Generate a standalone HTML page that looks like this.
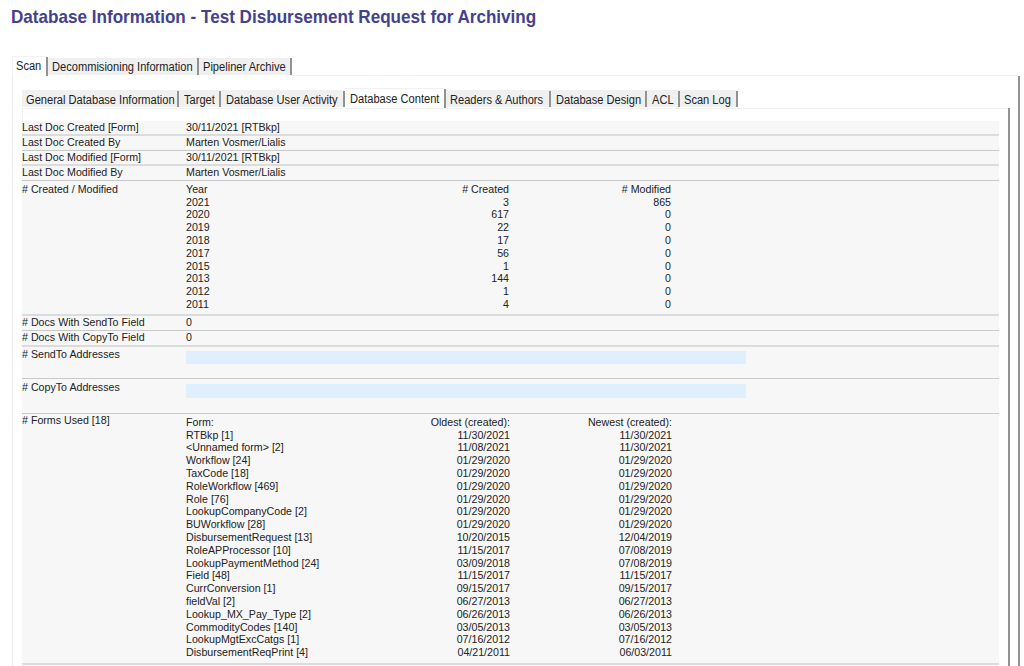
<!DOCTYPE html>
<html><head><meta charset="utf-8">
<style>
html,body{margin:0;padding:0;background:#fff;width:1024px;height:666px;overflow:hidden;position:relative;font-family:"Liberation Sans",sans-serif;color:#222}
.a{position:absolute}
#title{left:11px;top:7.6px;font-size:17.1px;font-weight:bold;color:#43428c;white-space:nowrap;line-height:20px;transform:scaleY(1.07);transform-origin:0 15.4px}
.tab{position:absolute;font-size:11.1px;line-height:14px;white-space:nowrap;color:#222;transform:scaleY(1.1);transform-origin:0 11px}
.t{position:absolute;font-size:10.67px;line-height:12.8px;white-space:nowrap;color:#222}
.r{text-align:right}
</style></head><body>
<div id="title" class="a">Database Information - Test Disbursement Request for Archiving</div>
<div class="a" style="left:12px;top:56px;width:35px;height:20px;background:#fff;border-top:1px solid #f2f2f2;border-left:1px solid #f2f2f2;box-sizing:border-box"></div>
<div class="a" style="left:48px;top:58px;width:150px;height:17px;background:#f0f0f0;"></div>
<div class="a" style="left:199px;top:58px;width:92px;height:17px;background:#f0f0f0;"></div>
<div class="a" style="left:46px;top:57px;width:2px;height:19px;background:#929292;"></div>
<div class="a" style="left:197px;top:58px;width:2px;height:17px;background:#929292;"></div>
<div class="a" style="left:290px;top:58px;width:2px;height:17px;background:#929292;"></div>
<div class="tab" style="left:16px;top:59px">Scan</div>
<div class="tab" style="left:52px;top:60px">Decommisioning Information</div>
<div class="tab" style="left:203px;top:60px">Pipeliner Archive</div>
<div class="a" style="left:292px;top:75px;width:726px;height:1px;background:#f0f0f0;"></div>
<div class="a" style="left:12px;top:76px;width:1px;height:600px;background:#ececec;"></div>
<div class="a" style="left:1018px;top:76px;width:2px;height:600px;background:#929292;"></div>
<div class="a" style="left:22px;top:90px;width:322px;height:17px;background:#f0f0f0;"></div>
<div class="a" style="left:446px;top:90px;width:291px;height:17px;background:#f0f0f0;"></div>
<div class="a" style="left:345px;top:88px;width:100px;height:20px;background:#fff;border-top:1px solid #f0f0f0;box-sizing:border-box"></div>
<div class="a" style="left:177px;top:91px;width:2px;height:16px;background:#929292;"></div>
<div class="a" style="left:219px;top:91px;width:2px;height:16px;background:#929292;"></div>
<div class="a" style="left:343px;top:91px;width:2px;height:16px;background:#929292;"></div>
<div class="a" style="left:549px;top:91px;width:2px;height:16px;background:#929292;"></div>
<div class="a" style="left:645px;top:91px;width:2px;height:16px;background:#929292;"></div>
<div class="a" style="left:678px;top:91px;width:2px;height:16px;background:#929292;"></div>
<div class="a" style="left:736px;top:91px;width:2px;height:16px;background:#929292;"></div>
<div class="a" style="left:444px;top:89px;width:2px;height:19px;background:#929292;"></div>
<div class="tab" style="left:26px;top:93px">General Database Information</div>
<div class="tab" style="left:184px;top:93px">Target</div>
<div class="tab" style="left:226px;top:93px">Database User Activity</div>
<div class="tab" style="left:450px;top:93px">Readers &amp; Authors</div>
<div class="tab" style="left:556px;top:93px">Database Design</div>
<div class="tab" style="left:652px;top:93px">ACL</div>
<div class="tab" style="left:684px;top:93px">Scan Log</div>
<div class="tab" style="left:350px;top:92px">Database Content</div>
<div class="a" style="left:737px;top:108px;width:271px;height:1px;background:#f0f0f0;"></div>
<div class="a" style="left:22px;top:108px;width:715px;height:1px;background:#f0f0f0;"></div>
<div class="a" style="left:22px;top:109px;width:1px;height:12px;background:#f0f0f0;"></div>
<div class="a" style="left:1008px;top:108px;width:2px;height:600px;background:#929292;"></div>
<div class="a" style="left:22px;top:121px;width:977px;height:545px;background:#f7f7f7;"></div>
<div class="a" style="left:22px;top:134px;width:977px;height:2px;background:#dcdcdc;"></div>
<div class="a" style="left:22px;top:150px;width:977px;height:1px;background:#c9c9c9;"></div>
<div class="a" style="left:22px;top:164px;width:977px;height:2px;background:#dcdcdc;"></div>
<div class="a" style="left:22px;top:180px;width:977px;height:1px;background:#c9c9c9;"></div>
<div class="a" style="left:22px;top:314px;width:977px;height:2px;background:#dcdcdc;"></div>
<div class="a" style="left:22px;top:330px;width:977px;height:1px;background:#c9c9c9;"></div>
<div class="a" style="left:22px;top:345px;width:977px;height:2px;background:#dcdcdc;"></div>
<div class="a" style="left:22px;top:378px;width:977px;height:1px;background:#c9c9c9;"></div>
<div class="a" style="left:22px;top:413px;width:977px;height:1px;background:#c9c9c9;"></div>
<div class="a" style="left:22px;top:663px;width:977px;height:2px;background:#dcdcdc;"></div>
<div class="a" style="left:186px;top:351px;width:560px;height:13px;background:#dfeffd;"></div>
<div class="a" style="left:186px;top:384px;width:560px;height:14px;background:#dfeffd;"></div>
<div class="t" style="left:22px;top:121px">Last Doc Created [Form]</div>
<div class="t" style="left:186px;top:121px">30/11/2021 [RTBkp]</div>
<div class="t" style="left:22px;top:136px">Last Doc Created By</div>
<div class="t" style="left:186px;top:136px">Marten Vosmer/Lialis</div>
<div class="t" style="left:22px;top:151px">Last Doc Modified [Form]</div>
<div class="t" style="left:186px;top:151px">30/11/2021 [RTBkp]</div>
<div class="t" style="left:22px;top:166px">Last Doc Modified By</div>
<div class="t" style="left:186px;top:166px">Marten Vosmer/Lialis</div>
<div class="t" style="left:22px;top:183px"># Created / Modified</div>
<div class="t" style="left:186px;top:183px">Year</div>
<div class="t r" style="right:515px;top:183px"># Created</div>
<div class="t r" style="right:353px;top:183px"># Modified</div>
<div class="t" style="left:186px;top:196px">2021</div>
<div class="t r" style="right:515px;top:196px">3</div>
<div class="t r" style="right:353px;top:196px">865</div>
<div class="t" style="left:186px;top:208px">2020</div>
<div class="t r" style="right:515px;top:208px">617</div>
<div class="t r" style="right:353px;top:208px">0</div>
<div class="t" style="left:186px;top:221px">2019</div>
<div class="t r" style="right:515px;top:221px">22</div>
<div class="t r" style="right:353px;top:221px">0</div>
<div class="t" style="left:186px;top:234px">2018</div>
<div class="t r" style="right:515px;top:234px">17</div>
<div class="t r" style="right:353px;top:234px">0</div>
<div class="t" style="left:186px;top:247px">2017</div>
<div class="t r" style="right:515px;top:247px">56</div>
<div class="t r" style="right:353px;top:247px">0</div>
<div class="t" style="left:186px;top:260px">2015</div>
<div class="t r" style="right:515px;top:260px">1</div>
<div class="t r" style="right:353px;top:260px">0</div>
<div class="t" style="left:186px;top:272px">2013</div>
<div class="t r" style="right:515px;top:272px">144</div>
<div class="t r" style="right:353px;top:272px">0</div>
<div class="t" style="left:186px;top:285px">2012</div>
<div class="t r" style="right:515px;top:285px">1</div>
<div class="t r" style="right:353px;top:285px">0</div>
<div class="t" style="left:186px;top:298px">2011</div>
<div class="t r" style="right:515px;top:298px">4</div>
<div class="t r" style="right:353px;top:298px">0</div>
<div class="t" style="left:22px;top:316px"># Docs With SendTo Field</div>
<div class="t" style="left:186px;top:316px">0</div>
<div class="t" style="left:22px;top:331px"># Docs With CopyTo Field</div>
<div class="t" style="left:186px;top:331px">0</div>
<div class="t" style="left:22px;top:348px"># SendTo Addresses</div>
<div class="t" style="left:22px;top:381px"># CopyTo Addresses</div>
<div class="t" style="left:22px;top:414px"># Forms Used [18]</div>
<div class="t" style="left:186px;top:416px">Form:</div>
<div class="t r" style="right:514px;top:416px">Oldest (created):</div>
<div class="t r" style="right:352px;top:416px">Newest (created):</div>
<div class="t" style="left:186px;top:429px">RTBkp [1]</div>
<div class="t r" style="right:514px;top:429px">11/30/2021</div>
<div class="t r" style="right:352px;top:429px">11/30/2021</div>
<div class="t" style="left:186px;top:441px">&lt;Unnamed form&gt; [2]</div>
<div class="t r" style="right:514px;top:441px">11/08/2021</div>
<div class="t r" style="right:352px;top:441px">11/30/2021</div>
<div class="t" style="left:186px;top:454px">Workflow [24]</div>
<div class="t r" style="right:514px;top:454px">01/29/2020</div>
<div class="t r" style="right:352px;top:454px">01/29/2020</div>
<div class="t" style="left:186px;top:467px">TaxCode [18]</div>
<div class="t r" style="right:514px;top:467px">01/29/2020</div>
<div class="t r" style="right:352px;top:467px">01/29/2020</div>
<div class="t" style="left:186px;top:480px">RoleWorkflow [469]</div>
<div class="t r" style="right:514px;top:480px">01/29/2020</div>
<div class="t r" style="right:352px;top:480px">01/29/2020</div>
<div class="t" style="left:186px;top:493px">Role [76]</div>
<div class="t r" style="right:514px;top:493px">01/29/2020</div>
<div class="t r" style="right:352px;top:493px">01/29/2020</div>
<div class="t" style="left:186px;top:505px">LookupCompanyCode [2]</div>
<div class="t r" style="right:514px;top:505px">01/29/2020</div>
<div class="t r" style="right:352px;top:505px">01/29/2020</div>
<div class="t" style="left:186px;top:518px">BUWorkflow [28]</div>
<div class="t r" style="right:514px;top:518px">01/29/2020</div>
<div class="t r" style="right:352px;top:518px">01/29/2020</div>
<div class="t" style="left:186px;top:531px">DisbursementRequest [13]</div>
<div class="t r" style="right:514px;top:531px">10/20/2015</div>
<div class="t r" style="right:352px;top:531px">12/04/2019</div>
<div class="t" style="left:186px;top:544px">RoleAPProcessor [10]</div>
<div class="t r" style="right:514px;top:544px">11/15/2017</div>
<div class="t r" style="right:352px;top:544px">07/08/2019</div>
<div class="t" style="left:186px;top:557px">LookupPaymentMethod [24]</div>
<div class="t r" style="right:514px;top:557px">03/09/2018</div>
<div class="t r" style="right:352px;top:557px">07/08/2019</div>
<div class="t" style="left:186px;top:569px">Field [48]</div>
<div class="t r" style="right:514px;top:569px">11/15/2017</div>
<div class="t r" style="right:352px;top:569px">11/15/2017</div>
<div class="t" style="left:186px;top:582px">CurrConversion [1]</div>
<div class="t r" style="right:514px;top:582px">09/15/2017</div>
<div class="t r" style="right:352px;top:582px">09/15/2017</div>
<div class="t" style="left:186px;top:595px">fieldVal [2]</div>
<div class="t r" style="right:514px;top:595px">06/27/2013</div>
<div class="t r" style="right:352px;top:595px">06/27/2013</div>
<div class="t" style="left:186px;top:608px">Lookup_MX_Pay_Type [2]</div>
<div class="t r" style="right:514px;top:608px">06/26/2013</div>
<div class="t r" style="right:352px;top:608px">06/26/2013</div>
<div class="t" style="left:186px;top:621px">CommodityCodes [140]</div>
<div class="t r" style="right:514px;top:621px">03/05/2013</div>
<div class="t r" style="right:352px;top:621px">03/05/2013</div>
<div class="t" style="left:186px;top:633px">LookupMgtExcCatgs [1]</div>
<div class="t r" style="right:514px;top:633px">07/16/2012</div>
<div class="t r" style="right:352px;top:633px">07/16/2012</div>
<div class="t" style="left:186px;top:646px">DisbursementReqPrint [4]</div>
<div class="t r" style="right:514px;top:646px">04/21/2011</div>
<div class="t r" style="right:352px;top:646px">06/03/2011</div>
</body></html>
